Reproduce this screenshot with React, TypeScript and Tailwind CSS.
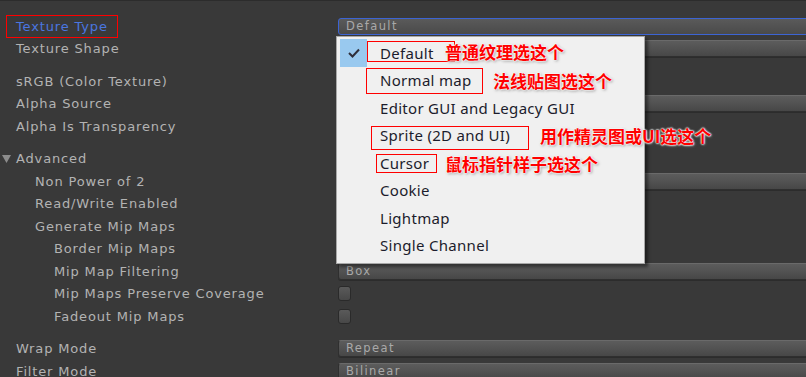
import React from 'react';

type Row =
  | { kind: 'row'; label: string; indent: number; control?: 'field' | 'check'; value?: string; focused?: boolean; title?: boolean; foldout?: boolean }
  | { kind: 'gap' };

// values under the popup are covered, so they are left empty
const rows: Row[] = [
  { kind: 'row', label: 'Texture Type', indent: 16, control: 'field', value: 'Default', focused: true, title: true },
  { kind: 'row', label: 'Texture Shape', indent: 16, control: 'field' },
  { kind: 'gap' },
  { kind: 'row', label: 'sRGB (Color Texture)', indent: 16, control: 'check' },
  { kind: 'row', label: 'Alpha Source', indent: 16, control: 'field' },
  { kind: 'row', label: 'Alpha Is Transparency', indent: 16, control: 'check' },
  { kind: 'gap' },
  { kind: 'row', label: 'Advanced', indent: 16, foldout: true },
  { kind: 'row', label: 'Non Power of 2', indent: 35, control: 'field' },
  { kind: 'row', label: 'Read/Write Enabled', indent: 35, control: 'check' },
  { kind: 'row', label: 'Generate Mip Maps', indent: 35, control: 'check' },
  { kind: 'row', label: 'Border Mip Maps', indent: 54, control: 'check' },
  { kind: 'row', label: 'Mip Map Filtering', indent: 54, control: 'field', value: 'Box' },
  { kind: 'row', label: 'Mip Maps Preserve Coverage', indent: 54, control: 'check' },
  { kind: 'row', label: 'Fadeout Mip Maps', indent: 54, control: 'check' },
  { kind: 'gap' },
  { kind: 'row', label: 'Wrap Mode', indent: 16, control: 'field', value: 'Repeat' },
  { kind: 'row', label: 'Filter Mode', indent: 16, control: 'field', value: 'Bilinear' },
];

const menuItems = [
  'Default',
  'Normal map',
  'Editor GUI and Legacy GUI',
  'Sprite (2D and UI)',
  'Cursor',
  'Cookie',
  'Lightmap',
  'Single Channel',
];

// red hand-drawn boxes and notes laid over the screenshot
const boxes = [
  { l: 6, t: 14, w: 112, h: 23 },
  { l: 367, t: 40, w: 88, h: 21 },
  { l: 366, t: 67, w: 117, h: 26 },
  { l: 371, t: 125, w: 158, h: 24 },
  { l: 376, t: 153, w: 61, h: 19 },
];

const notes = [
  { l: 445, t: 40, text: '普通纹理选这个' },
  { l: 493, t: 69, text: '法线贴图选这个' },
  { l: 540, t: 124, text: '用作精灵图或UI选这个' },
  { l: 445, t: 152, text: '鼠标指针样子选这个' },
];

function Field({ value, focused }: { value?: string; focused?: boolean }) {
  return (
    <div
      className={
        'flex h-[17px] w-[calc(100%+8px)] items-center rounded-[3px] border pl-[7px] text-[11.5px] tracking-[1.4px] text-[#a9a9a9] ' +
        (focused
          ? 'border-[#3c64d4] bg-gradient-to-b from-[#5a5a5a] to-[#4a4a4a]'
          : 'border-[#2f2f2f] border-t-[#6a6a6a] bg-gradient-to-b from-[#5c5c5c] via-[#525252] to-[#474747] shadow-[0_1px_0_#2c2c2c]')
      }
    >
      {value}
    </div>
  );
}

function Check() {
  return (
    <div className="h-[15px] w-[13px] rounded-[3px] border border-[#2a2a2a] bg-gradient-to-b from-[#5a5a5a] to-[#484848]" />
  );
}

export default function App() {
  return (
    <div
      className="relative h-[377px] w-[806px] overflow-hidden border-t border-[#2c2c2c] bg-[#393939] pt-[14px]"
      style={{ fontFamily: '"DejaVu Sans", "Noto Sans", sans-serif' }}
    >
      <div className="flex flex-col">
        {rows.map((row, i) =>
          row.kind === 'gap' ? (
            <div key={i} className="h-[10px]" />
          ) : (
            <div key={i} className="flex h-[22.5px] items-center">
              <div
                className={
                  'flex w-[338px] shrink-0 items-center text-[13px] tracking-[0.85px] ' +
                  (row.title ? 'text-[#4a76e0]' : 'text-[#b3b3b3]')
                }
                style={{ paddingLeft: row.foldout ? 2 : row.indent }}
              >
                {row.foldout && (
                  <svg width="9" height="8" viewBox="0 0 9 8" className="mr-[5px]">
                    <polygon points="0,0 9,0 4.5,8" fill="#8c8c8c" />
                  </svg>
                )}
                {row.label}
              </div>
              <div className="flex-1">
                {row.control === 'field' && <Field value={row.value} focused={row.focused} />}
                {row.control === 'check' && <Check />}
              </div>
            </div>
          )
        )}
      </div>

      {/* popup menu of Texture Type */}
      <div
        className="absolute left-[336px] top-[35px] w-[309px] border border-[#a8a8a8] bg-[#f0f0f0] pb-[4px] pt-[2px] shadow-[3px_3px_3px_rgba(0,0,0,0.45)]"
        style={{ fontFamily: '"Noto Sans", "Noto Sans CJK SC", sans-serif' }}
      >
        {menuItems.map((item, i) => (
          <div key={item} className="flex h-[27.5px] items-center">
            <div
              className={
                'ml-[3px] flex h-full w-[27px] items-center justify-center ' + (i === 0 ? 'bg-[#99c9ef]' : '')
              }
            >
              {i === 0 && (
                <svg width="12" height="10" viewBox="0 0 12 10">
                  <polyline points="1,5 4.5,8.5 11,1.5" fill="none" stroke="#2e2e3a" strokeWidth="2" />
                </svg>
              )}
            </div>
            <span className="pl-[13px] text-[15px] tracking-[0.3px] text-[#1c1c2c]">{item}</span>
          </div>
        ))}
      </div>

      {boxes.map((b, i) => (
        <div
          key={i}
          className="absolute border border-[#ff0000]"
          style={{ left: b.l, top: b.t, width: b.w, height: b.h }}
        />
      ))}

      {notes.map((n) => (
        <div
          key={n.text}
          className="absolute text-[17px] font-bold leading-[22px] text-[#ff0000] [text-shadow:0_0_2px_#fff,0_0_2px_#fff,0_0_2px_#fff,1px_1px_3px_#777]"
          style={{ left: n.l, top: n.t, fontFamily: '"Noto Sans CJK SC", "Noto Sans", sans-serif' }}
        >
          {n.text}
        </div>
      ))}
    </div>
  );
}
